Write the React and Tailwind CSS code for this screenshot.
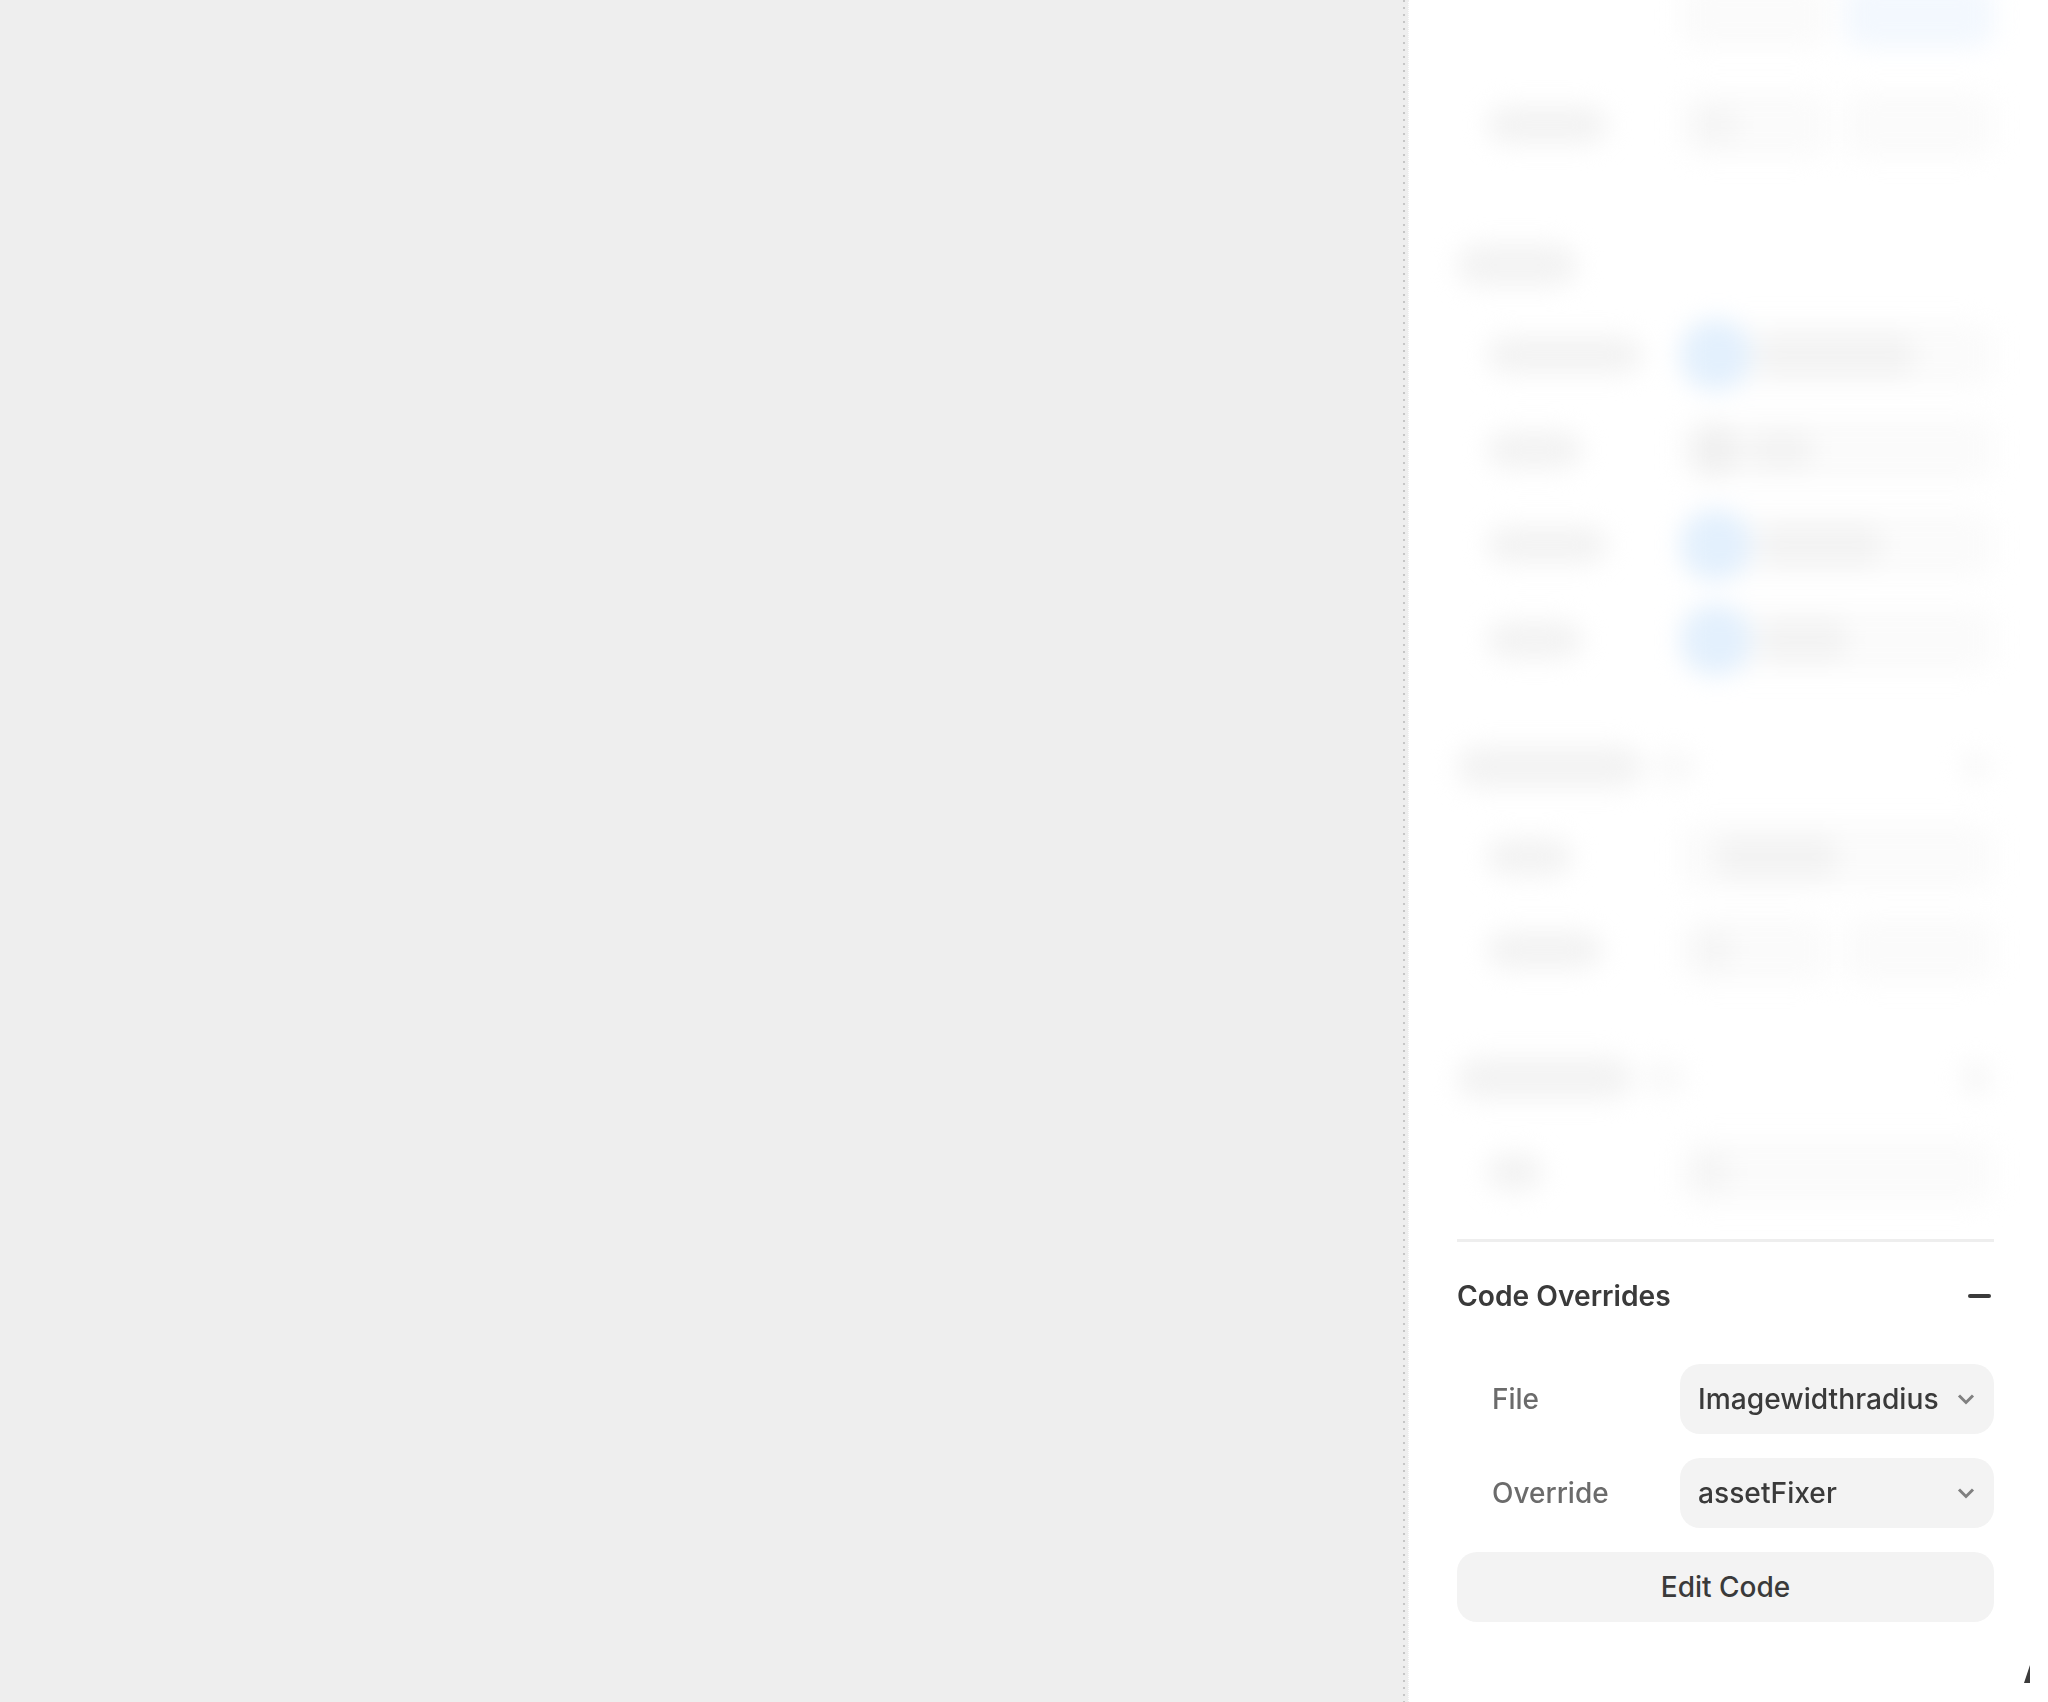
const font = { fontFamily: "Inter, 'Noto Sans', sans-serif" }

function Chevron() {
  return (
    <svg width="18" height="12" viewBox="0 0 18 12" fill="none" className="shrink-0">
      <path d="M2 2.5 L9 9.5 L16 2.5" stroke="#808080" strokeWidth="3" />
    </svg>
  )
}

function Pill({ label, value }) {
  return (
    <div className="flex items-center h-[70px]">
      <span className="ml-[35px] text-[28px] text-[#6b6b6b] font-medium">{label}</span>
      <div className="ml-auto w-[314px] h-[70px] rounded-[20px] bg-[#f3f3f3] flex items-center justify-between pl-[18px] pr-[19px]">
        <span className="text-[28.2px] text-[#3a3a3a] font-medium">{value}</span>
        <Chevron />
      </div>
    </div>
  )
}

// The label blob on the left of a blurred row
function Blob({ className }) {
  return <div className={'rounded-full bg-[#f3f3f3] ' + className} />
}

// Circle swatch at the start of a blurred control
function Swatch({ blue }) {
  return <div className={'shrink-0 rounded-full ' + (blue ? 'w-[72px] h-[72px] bg-[#e3f0fd]' : 'w-[50px] h-[50px] ml-[11px] bg-[#f0f0f0]')} />
}

function Control({ children }) {
  return <div className="ml-auto w-[314px] h-[66px] rounded-[20px] bg-[#fbfbfb] flex items-center">{children}</div>
}

function SplitControl({ swatchWidth, blue }) {
  return (
    <div className="ml-auto w-[314px] h-[66px] flex gap-[14px]">
      <div className="flex-1 rounded-[20px] flex items-center bg-[#fbfbfb]">
        {swatchWidth && <div className={'ml-[14px] h-[40px] rounded-full bg-[#f5f5f5] ' + swatchWidth} />}
      </div>
      <div className={'flex-1 rounded-[20px] ' + (blue ? 'bg-[#f3f8fe]' : 'bg-[#fbfbfb]')} />
    </div>
  )
}

export default function App() {
  return (
    <div className="flex w-full h-screen overflow-hidden bg-white" style={font}>
      <div className="flex-1 bg-[#eeeeee] flex justify-end pr-[3px]">
        <div className="w-[2px] h-full bg-[repeating-linear-gradient(to_bottom,#c6c6c6_0_2px,transparent_2px_7px)]" />
      </div>

      <div className="relative w-[640px] pl-[48px] pr-[54px] border-l border-dotted border-[#eeeeee]">
        {/* everything above Code Overrides sits under a blur */}
        <div className="blur-[12px] h-[1239px] flex flex-col">
          <div className="flex items-center h-[70px] -mt-[20px] shrink-0">
            <SplitControl blue />
          </div>

          <div className="flex items-center h-[70px] mt-[40px] shrink-0">
            <Blob className="ml-[30px] w-[120px] h-[38px]" />
            <SplitControl swatchWidth="w-[44px]" />
          </div>

          <div className="flex items-center h-[70px] mt-[70px] shrink-0">
            <Blob className="w-[120px] h-[42px]" />
          </div>

          <div className="flex items-center h-[70px] mt-[20px] shrink-0">
            <Blob className="ml-[30px] w-[155px] h-[38px]" />
            <Control>
              <Swatch blue />
              <Blob className="ml-[4px] w-[160px] h-[42px]" />
            </Control>
          </div>

          <div className="flex items-center h-[70px] mt-[25px] shrink-0">
            <Blob className="ml-[30px] w-[95px] h-[38px]" />
            <Control>
              <Swatch />
              <Blob className="ml-[8px] w-[65px] h-[38px]" />
            </Control>
          </div>

          <div className="flex items-center h-[70px] mt-[25px] shrink-0">
            <Blob className="ml-[30px] w-[120px] h-[38px]" />
            <Control>
              <Swatch blue />
              <Blob className="ml-[6px] w-[125px] h-[42px]" />
            </Control>
          </div>

          <div className="flex items-center h-[70px] mt-[25px] shrink-0">
            <Blob className="ml-[30px] w-[95px] h-[38px]" />
            <Control>
              <Swatch blue />
              <Blob className="ml-[6px] w-[90px] h-[42px]" />
            </Control>
          </div>

          <div className="flex items-center h-[70px] mt-[57px] shrink-0">
            <Blob className="w-[185px] h-[42px]" />
            <div className="ml-[10px] w-[44px] h-[34px] rounded-full bg-[#f9f9f9]" />
            <div className="ml-auto mr-[4px] w-[28px] h-[28px] rounded-full bg-[#f8f8f8]" />
          </div>

          <div className="flex items-center h-[70px] mt-[20px] shrink-0">
            <Blob className="ml-[30px] w-[85px] h-[38px]" />
            <Control>
              <Blob className="ml-[34px] w-[125px] h-[44px]" />
            </Control>
          </div>

          <div className="flex items-center h-[70px] mt-[23px] shrink-0">
            <Blob className="ml-[30px] w-[115px] h-[38px]" />
            <SplitControl swatchWidth="w-[40px]" />
          </div>

          <div className="flex items-center h-[70px] mt-[58px] shrink-0">
            <Blob className="w-[175px] h-[42px]" />
            <div className="ml-[10px] w-[44px] h-[34px] rounded-full bg-[#f9f9f9]" />
            <div className="ml-auto mr-[4px] w-[28px] h-[32px] rounded-full bg-[#f6f6f6]" />
          </div>

          <div className="flex items-center h-[70px] mt-[24px] shrink-0">
            <Blob className="ml-[30px] w-[55px] h-[38px]" />
            <Control>
              <div className="ml-[10px] w-[42px] h-[42px] rounded-full bg-[#f5f5f5]" />
            </Control>
          </div>
        </div>

        <div className="h-[3px] bg-[#eeeeee]" />

        <div className="blur-[0.4px]">
          <div className="flex items-center justify-between h-[36px] mt-[36px]">
            <span className="text-[28.2px] text-[#3a3a3a] font-semibold">Code Overrides</span>
            <span className="w-[23px] h-[4px] mr-[3px] rounded-full bg-[#3a3a3a]" />
          </div>

          <div className="mt-[50px] flex flex-col gap-[24px]">
            <Pill label="File" value="Imagewidthradius" />
            <Pill label="Override" value="assetFixer" />
            <button className="h-[70px] rounded-[20px] bg-[#f3f3f3] text-[28px] text-[#3a3a3a] font-medium">
              Edit Code
            </button>
          </div>
        </div>

        {/* cursor tip peeking in at the corner */}
        <svg width="6" height="18" viewBox="0 0 6 18" className="absolute left-[615px] top-[1665px]">
          <polygon points="6,0 6,18 0,18" fill="#3c3c3c" />
        </svg>
      </div>
    </div>
  )
}
